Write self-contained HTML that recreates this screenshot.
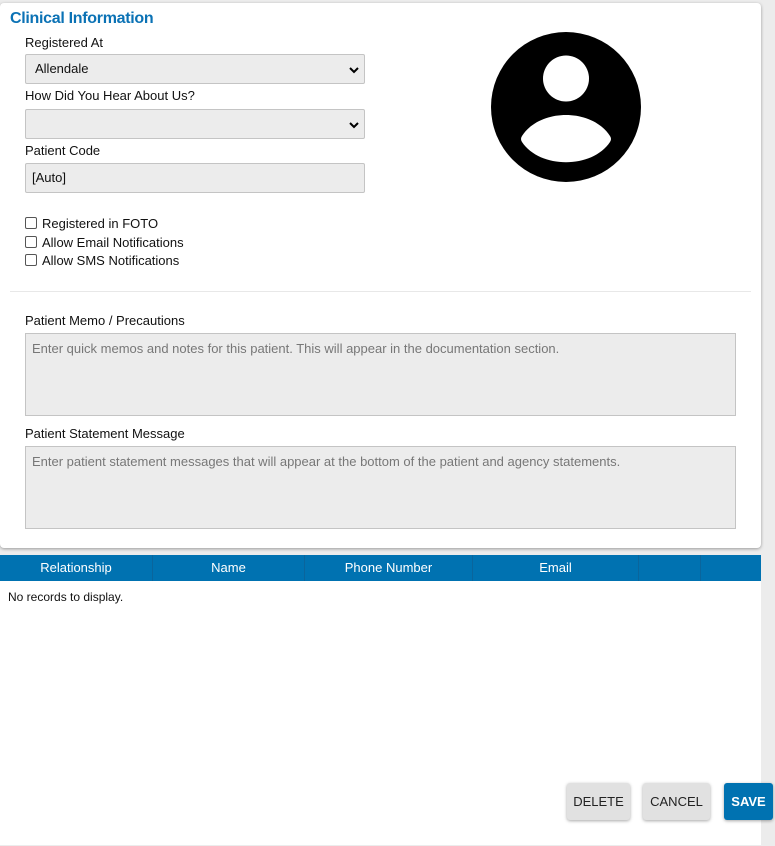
<!DOCTYPE html>
<html><head><style>
*{box-sizing:border-box;margin:0;padding:0}
body{width:775px;height:846px;background:#ececec;font-family:"Liberation Sans",sans-serif;font-size:13px;color:#111;position:relative;overflow:hidden}
.a{position:absolute}
.card{left:0;top:3px;width:761px;height:545px;background:#fff;border-radius:4px;box-shadow:0 1px 3px rgba(0,0,0,.35)}
.lbl{left:25px;font-size:13px;line-height:16px}
.fld{left:25px;width:340px;height:30px;background:#ececec;border:1px solid #c4c4c4;border-radius:2px;padding-left:9px;line-height:28px;font-size:13px}
.cb{left:25px;width:12px;height:12px;border:1px solid #555;border-radius:2px;background:#fff}
.cbl{left:42px;font-size:13px;line-height:16px}
.ta{left:25px;width:711px;height:83px;background:#ececec;border:1px solid #c4c4c4;padding:7px 6px;color:#777;font-size:13px}
.th{top:555px;height:26px;background:#0072b1;color:#fff;font-size:13px;line-height:26px;text-align:center;border-right:1px solid #0a659c}
.btn{top:783px;height:37px;border-radius:3px;background:#e1e1e1;box-shadow:0 1px 3px rgba(0,0,0,.35);font-size:13px;line-height:37px;text-align:center;color:#222}
</style></head><body>
<div class="a card"></div>
<div class="a" style="left:10px;top:10px;font-size:16px;font-weight:bold;color:#0b72b5;letter-spacing:-0.3px">Clinical Information</div>
<div class="a lbl" style="top:35px">Registered At</div>
<div class="a fld" style="top:54px">Allendale<svg class="a" style="right:5px;top:11px" width="10" height="8" viewBox="0 0 10 8"><path d="M1 2l4 4 4-4" stroke="#000" stroke-width="2" fill="none"/></svg></div>
<div class="a lbl" style="top:88px">How Did You Hear About Us?</div>
<div class="a fld" style="top:109px"><svg class="a" style="right:5px;top:11px" width="10" height="8" viewBox="0 0 10 8"><path d="M1 2l4 4 4-4" stroke="#000" stroke-width="2" fill="none"/></svg></div>
<div class="a lbl" style="top:143px">Patient Code</div>
<div class="a fld" style="top:163px;padding-left:6px">[Auto]</div>
<div class="a cb" style="top:217px"></div><div class="a cbl" style="top:216px">Registered in FOTO</div>
<div class="a cb" style="top:236px"></div><div class="a cbl" style="top:235px">Allow Email Notifications</div>
<div class="a cb" style="top:254px"></div><div class="a cbl" style="top:253px">Allow SMS Notifications</div>
<svg class="a" style="left:490px;top:31px" width="152" height="152" viewBox="490 31 152 152">
<circle cx="566" cy="107" r="75" fill="#000"/>
<circle cx="566" cy="78.5" r="23" fill="#fff"/>
<path d="M522 136 C540 108 592 108 610 136 Q612 139 610 142 C592 169 540 169 522 142 Q520 139 522 136Z" fill="#fff"/>
</svg>
<div class="a" style="left:10px;top:291px;width:741px;height:1px;background:#e8e8e8"></div>
<div class="a lbl" style="top:313px">Patient Memo / Precautions</div>
<div class="a ta" style="top:333px">Enter quick memos and notes for this patient. This will appear in the documentation section.</div>
<div class="a lbl" style="top:426px">Patient Statement Message</div>
<div class="a ta" style="top:446px">Enter patient statement messages that will appear at the bottom of the patient and agency statements.</div>
<div class="a" style="left:0;top:581px;width:761px;height:264px;background:#fff"></div>
<div class="a" style="left:0;top:555px;width:761px;height:26px;background:#0072b1"></div>
<div class="a th" style="left:0;width:153px">Relationship</div>
<div class="a th" style="left:153px;width:152px">Name</div>
<div class="a th" style="left:305px;width:168px">Phone Number</div>
<div class="a th" style="left:473px;width:166px">Email</div>
<div class="a th" style="left:639px;width:62px"></div>
<div class="a" style="left:8px;top:590px;font-size:12px">No records to display.</div>
<div class="a btn" style="left:567px;width:63px">DELETE</div>
<div class="a btn" style="left:643px;width:67px">CANCEL</div>
<div class="a btn" style="left:724px;width:49px;background:#0072b1;color:#fff;font-weight:bold">SAVE</div>
</body></html>
